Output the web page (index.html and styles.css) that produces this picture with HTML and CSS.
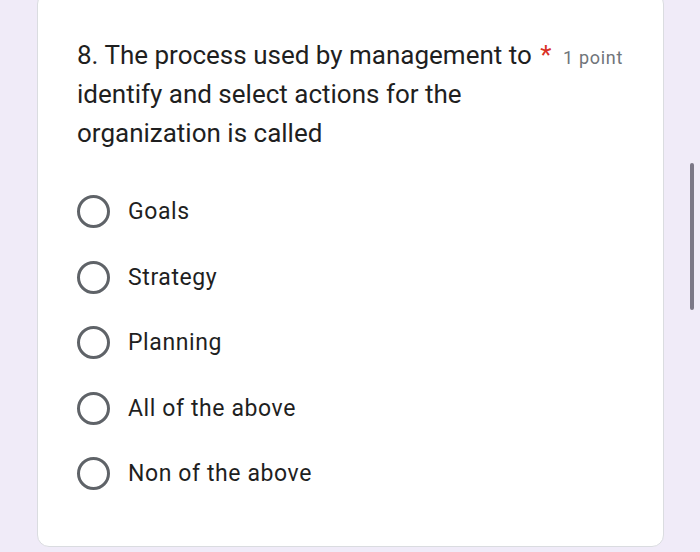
FILE: index.html
```html
<!DOCTYPE html>
<html>
<head>
<meta charset="utf-8">
<link rel="stylesheet" href="styles.css">
</head>
<body>
<div class="page">
  <div class="card">
    <div class="header">
      <div class="title">8. The process used by management to <span class="req">*</span> identify and select actions for the organization is called</div>
      <div class="points">1 point</div>
    </div>
    <div class="options">
      <div class="option"><span class="radio"></span><span class="label">Goals</span></div>
      <div class="option"><span class="radio"></span><span class="label">Strategy</span></div>
      <div class="option"><span class="radio"></span><span class="label">Planning</span></div>
      <div class="option"><span class="radio"></span><span class="label">All of the above</span></div>
      <div class="option"><span class="radio"></span><span class="label">Non of the above</span></div>
    </div>
  </div>
  <div class="scrollbar"></div>
</div>
</body>
</html>
```
FILE: styles.css
```css
html, body {
  margin: 0;
  padding: 0;
  background: #f0ebf8;
  font-family: Roboto, "Liberation Sans", sans-serif;
}
.page {
  position: relative;
  width: 700px;
  height: 552px;
  overflow: hidden;
}
.card {
  box-sizing: border-box;
  margin: -8px 0 0 37px;
  width: 627px;
  background: #fff;
  border: 1px solid #dadce0;
  border-radius: 12px;
  padding: 43px 40px 39px 39px;
}
.header {
  display: flex;
  align-items: baseline;
}
.title {
  width: 488px;
  font-size: 26px;
  line-height: 39px;
  color: #1f1f1f;
}
.req {
  color: #d93025;
  margin-left: 2px;
}
.points {
  margin-left: auto;
  font-size: 18px;
  letter-spacing: 0.7px;
  color: #70757a;
  white-space: nowrap;
}
.options {
  margin-top: 26px;
  display: flex;
  flex-direction: column;
}
.option {
  height: 65.5px;
  display: flex;
  align-items: center;
}
.radio {
  box-sizing: border-box;
  width: 33px;
  height: 33px;
  border: 3px solid #5f6368;
  border-radius: 50%;
  flex: none;
}
.label {
  margin-left: 18px;
  font-size: 23px;
  letter-spacing: 0.6px;
  color: #1f1f1f;
}
.scrollbar {
  position: absolute;
  left: 690px;
  top: 163px;
  width: 4px;
  height: 147px;
  border-radius: 2px;
  background: #7b7787;
}
```
